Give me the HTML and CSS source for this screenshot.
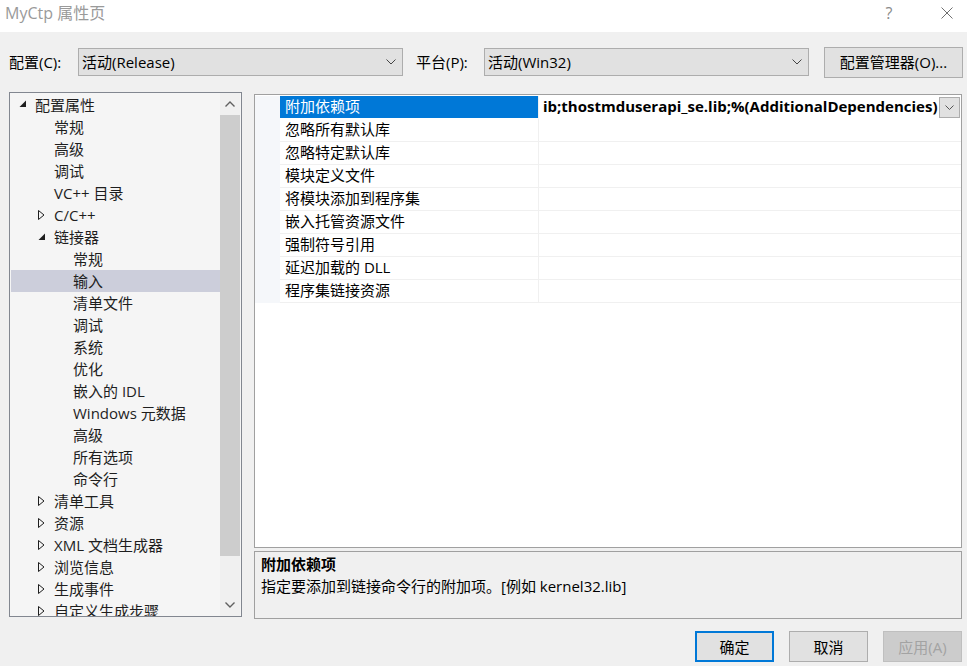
FILE: index.html
```html
<!DOCTYPE html>
<html lang="zh-CN">
<head>
<meta charset="utf-8">
<title>MyCtp 属性页</title>
<link rel="stylesheet" href="styles.css">
</head>
<body>
<div class="window">
  <div class="titlebar">
    <span class="title">MyCtp 属性页</span>
    <span class="help">?</span>
    <span class="close"><svg width="12" height="12" viewBox="0 0 12 12"><path d="M0.5 0.5 L11.5 11.5 M11.5 0.5 L0.5 11.5" stroke="#6f6f6f" stroke-width="1" fill="none"/></svg></span>
  </div>

  <div class="toolbar">
    <span class="label label-config">配置(C):</span>
    <div class="combo"><span class="combo-text">活动(Release)</span><svg class="chev" width="10" height="6" viewBox="0 0 10 6"><path d="M0.5 0.5 L5 5 L9.5 0.5" stroke="#444" fill="none"/></svg></div>
    <span class="label label-platform">平台(P):</span>
    <div class="combo"><span class="combo-text">活动(Win32)</span><svg class="chev" width="10" height="6" viewBox="0 0 10 6"><path d="M0.5 0.5 L5 5 L9.5 0.5" stroke="#444" fill="none"/></svg></div>
    <button class="btn btn-manager">配置管理器(O)...</button>
  </div>

  <div class="main">
    <div class="tree">
      <div class="tree-list">
        <div class="node l1"><span class="tog"><svg width="8" height="8" viewBox="0 0 8 8"><polygon points="7,0.5 7,7 0.5,7" fill="#1e1e1e"/></svg></span>配置属性</div>
        <div class="node l2"><span class="tog"></span>常规</div>
        <div class="node l2"><span class="tog"></span>高级</div>
        <div class="node l2"><span class="tog"></span>调试</div>
        <div class="node l2"><span class="tog"></span>VC++ 目录</div>
        <div class="node l2"><span class="tog"><svg width="8" height="10" viewBox="0 0 8 10"><polygon points="0.5,0.5 6,5 0.5,9.5" fill="none" stroke="#1e1e1e"/></svg></span>C/C++</div>
        <div class="node l2"><span class="tog"><svg width="8" height="8" viewBox="0 0 8 8"><polygon points="7,0.5 7,7 0.5,7" fill="#1e1e1e"/></svg></span>链接器</div>
        <div class="node l3"><span class="tog"></span>常规</div>
        <div class="node l3 selected"><span class="tog"></span>输入</div>
        <div class="node l3"><span class="tog"></span>清单文件</div>
        <div class="node l3"><span class="tog"></span>调试</div>
        <div class="node l3"><span class="tog"></span>系统</div>
        <div class="node l3"><span class="tog"></span>优化</div>
        <div class="node l3"><span class="tog"></span>嵌入的 IDL</div>
        <div class="node l3"><span class="tog"></span>Windows 元数据</div>
        <div class="node l3"><span class="tog"></span>高级</div>
        <div class="node l3"><span class="tog"></span>所有选项</div>
        <div class="node l3"><span class="tog"></span>命令行</div>
        <div class="node l2"><span class="tog"><svg width="8" height="10" viewBox="0 0 8 10"><polygon points="0.5,0.5 6,5 0.5,9.5" fill="none" stroke="#1e1e1e"/></svg></span>清单工具</div>
        <div class="node l2"><span class="tog"><svg width="8" height="10" viewBox="0 0 8 10"><polygon points="0.5,0.5 6,5 0.5,9.5" fill="none" stroke="#1e1e1e"/></svg></span>资源</div>
        <div class="node l2"><span class="tog"><svg width="8" height="10" viewBox="0 0 8 10"><polygon points="0.5,0.5 6,5 0.5,9.5" fill="none" stroke="#1e1e1e"/></svg></span>XML 文档生成器</div>
        <div class="node l2"><span class="tog"><svg width="8" height="10" viewBox="0 0 8 10"><polygon points="0.5,0.5 6,5 0.5,9.5" fill="none" stroke="#1e1e1e"/></svg></span>浏览信息</div>
        <div class="node l2"><span class="tog"><svg width="8" height="10" viewBox="0 0 8 10"><polygon points="0.5,0.5 6,5 0.5,9.5" fill="none" stroke="#1e1e1e"/></svg></span>生成事件</div>
        <div class="node l2"><span class="tog"><svg width="8" height="10" viewBox="0 0 8 10"><polygon points="0.5,0.5 6,5 0.5,9.5" fill="none" stroke="#1e1e1e"/></svg></span>自定义生成步骤</div>
      </div>
      <div class="vscroll">
        <div class="sb-btn"><svg width="10" height="6" viewBox="0 0 10 6"><path d="M0.5 5.5 L5 1 L9.5 5.5" stroke="#606060" stroke-width="1.4" fill="none"/></svg></div>
        <div class="sb-thumb"></div>
        <div class="sb-track"></div>
        <div class="sb-btn"><svg width="10" height="6" viewBox="0 0 10 6"><path d="M0.5 0.5 L5 5 L9.5 0.5" stroke="#606060" stroke-width="1.4" fill="none"/></svg></div>
      </div>
    </div>

    <div class="right">
      <div class="grid">
        <div class="row">
          <div class="margin"></div>
          <div class="name sel">附加依赖项</div>
          <div class="value edit"><span class="vtext">ib;thostmduserapi_se.lib;%(AdditionalDependencies)</span><span class="dd"><svg width="9" height="5" viewBox="0 0 9 5"><path d="M0.5 0.5 L4.5 4.5 L8.5 0.5" stroke="#555" fill="none"/></svg></span></div>
        </div>
        <div class="row"><div class="margin"></div><div class="name">忽略所有默认库</div><div class="value"></div></div>
        <div class="row"><div class="margin"></div><div class="name">忽略特定默认库</div><div class="value"></div></div>
        <div class="row"><div class="margin"></div><div class="name">模块定义文件</div><div class="value"></div></div>
        <div class="row"><div class="margin"></div><div class="name">将模块添加到程序集</div><div class="value"></div></div>
        <div class="row"><div class="margin"></div><div class="name">嵌入托管资源文件</div><div class="value"></div></div>
        <div class="row"><div class="margin"></div><div class="name">强制符号引用</div><div class="value"></div></div>
        <div class="row"><div class="margin"></div><div class="name">延迟加载的 DLL</div><div class="value"></div></div>
        <div class="row"><div class="margin"></div><div class="name">程序集链接资源</div><div class="value"></div></div>
      </div>
      <div class="desc">
        <div class="desc-title">附加依赖项</div>
        <div class="desc-text">指定要添加到链接命令行的附加项。[例如 kernel32.lib]</div>
      </div>
    </div>
  </div>

  <div class="buttons">
    <button class="btn btn-dlg btn-default">确定</button>
    <button class="btn btn-dlg">取消</button>
    <button class="btn btn-dlg btn-disabled">应用(A)</button>
  </div>
</div>
</body>
</html>
```

FILE: styles.css
```css
* { box-sizing: border-box; }
html, body { margin: 0; padding: 0; }
body {
  width: 967px;
  height: 666px;
  overflow: hidden;
  background: #f0f0f0;
  font-family: "Open Sans", "Noto Sans CJK SC", sans-serif;
  font-size: 15px;
  color: #000;
}
.window { width: 967px; height: 666px; display: flex; flex-direction: column; }

.titlebar {
  height: 32px;
  background: #fff;
  display: flex;
  align-items: center;
  padding-bottom: 6px;
  flex: none;
}
.title { margin-left: 5px; font-size: 16px; color: #9a9a9a; flex: 1; line-height: 22px; }
.help { color: #8a8a8a; font-size: 16px; width: 14px; margin-right: 45px; text-align: center; line-height: 22px; }
.close { width: 12px; height: 12px; margin-right: 14px; display: flex; }

.toolbar {
  margin-top: 15px;
  height: 30px;
  display: flex;
  align-items: center;
  flex: none;
}
.label { line-height: 20px; }
.label-config { margin-left: 9px; width: 69px; }
.label-platform { margin-left: 13px; width: 68px; }
.combo {
  width: 325px;
  height: 28px;
  background: #e1e1e1;
  border: 1px solid #adadad;
  display: flex;
  align-items: center;
  padding-left: 3px;
  padding-right: 6px;
}
.combo-text { flex: 1; line-height: 20px; }
.chev { flex: none; }

.btn {
  font-family: "Open Sans", "Noto Sans CJK SC", sans-serif;
  font-size: 15px;
  color: #000;
  background: #e1e1e1;
  border: 1px solid #adadad;
  padding: 0;
  margin: 0;
  line-height: 20px;
}
.btn-manager { margin-left: 15px; width: 139px; height: 31px; }

.main {
  display: flex;
  margin-top: 15px;
  flex: none;
}
.tree {
  margin-left: 9px;
  width: 233px;
  height: 525px;
  border: 1px solid #828790;
  background: #f5f5f5;
  display: flex;
  padding-right: 1px;
}
.tree-list {
  width: 210px;
  height: 523px;
  padding: 1px 0 0 1px;
  overflow: hidden;
}
.node {
  height: 22px;
  line-height: 22px;
  display: flex;
  align-items: center;
  white-space: nowrap;
  color: #1e1e1e;
}
.node.l1 { padding-left: 5px; }
.node.l2 { padding-left: 24px; }
.node.l3 { padding-left: 43px; }
.node.selected { background: #cccedb; }
.tog { width: 19px; flex: none; display: flex; align-items: center; padding-left: 3px; }
.node.l1 .tog svg { margin-top: -2px; }

.vscroll {
  width: 20px;
  height: 523px;
  background: #f0f0f0;
  display: flex;
  flex-direction: column;
}
.sb-btn { height: 22px; display: flex; align-items: center; justify-content: center; flex: none; }
.sb-thumb { height: 441px; background: #cdcdcd; flex: none; }
.sb-track { flex: 1; }

.right {
  margin-left: 12px;
  margin-top: 2px;
  width: 708px;
  display: flex;
  flex-direction: column;
}
.grid {
  height: 454px;
  background: #fff;
  border: 1px solid #a0a0a0;
  padding-top: 1px;
}
.row { display: flex; height: 23px; }
.margin { width: 25px; background: #f5f7fa; flex: none; }
.name {
  width: 259px;
  flex: none;
  border-bottom: 1px solid #f0f0f0;
  border-right: 1px solid #f0f0f0;
  padding-left: 5px;
  line-height: 21px;
  white-space: nowrap;
}
.name.sel { background: #0078d7; color: #fff; border-bottom-color: #fff; }
.value {
  flex: 1;
  border-bottom: 1px solid #f0f0f0;
  display: flex;
  align-items: center;
}
.value.edit { border-bottom-color: #fff; padding-left: 4px; padding-right: 1px; }
.vtext { flex: 1; font-weight: bold; line-height: 21px; white-space: nowrap; overflow: hidden; margin-top: -1px; }
.dd {
  width: 21px;
  height: 21px;
  background: #e1e1e1;
  border: 1px solid #adadad;
  display: flex;
  align-items: center;
  justify-content: center;
  flex: none;
}

.desc {
  margin-top: 3px;
  height: 68px;
  border: 1px solid #a0a0a0;
  background: #f0f0f0;
  padding: 1px 0 0 6px;
}
.desc-title { font-weight: bold; line-height: 22px; }
.desc-text { line-height: 22px; }

.buttons {
  display: flex;
  justify-content: flex-end;
  margin-top: 12px;
  padding-right: 5px;
  gap: 15px;
}
.btn-dlg { width: 79px; height: 31px; }
.btn-default { border: 2px solid #0078d7; }
.btn-disabled { background: #cccccc; border-color: #bfbfbf; color: #a3a3a3; }
```
